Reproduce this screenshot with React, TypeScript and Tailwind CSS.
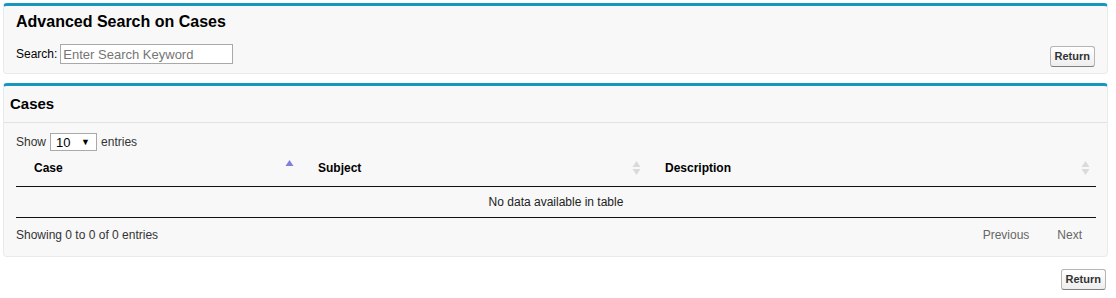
import React from "react";

const SortBoth = () => (
  <svg width="9" height="16" viewBox="0 0 9 16" className="block">
    <path d="M4.5 1 L8.5 7 L0.5 7 Z" fill="#dadada" />
    <path d="M4.5 15 L8.5 9 L0.5 9 Z" fill="#dadada" />
  </svg>
);

const SortAsc = () => (
  <svg width="9" height="16" viewBox="0 0 9 16" className="block">
    <path d="M4.5 1 L8.5 7 L0.5 7 Z" fill="#7f7fdd" />
  </svg>
);

const ReturnBtn = () => (
  <button className="h-[21px] px-[4px] rounded-[3px] border border-[#b5b5b5] border-b-[#7f7f7f] bg-gradient-to-b from-white to-[#eeeeee] text-[11px] font-bold text-[#333] leading-none">
    Return
  </button>
);

export default function App() {
  return (
    <div
      className="bg-white min-h-[298px] pl-[3px] pr-[8px] pt-[3px] text-[12px] text-[#222]"
      style={{ fontFamily: '"Liberation Sans", Arial, sans-serif' }}
    >
      {/* Panel 1 */}
      <div className="rounded-[4px] border border-[#eaeaea] border-t-[3px] border-t-[#1797c0] bg-[#f8f8f8] h-[71px] flex flex-col">
        <div className="pl-[12px] pt-[7px] text-[16px] font-bold text-black leading-[18px]">
          Advanced Search on Cases
        </div>
        <div className="flex items-end justify-between pl-[12px] pr-[12px] mt-[13px]">
          <div className="flex items-center gap-[3px]">
            <span className="text-[12px] text-black">Search:</span>
            <input
              placeholder="Enter Search Keyword"
              className="w-[173px] h-[20px] border border-[#a9a9a9] bg-white px-[2px] text-[13px] placeholder:text-[#757575] outline-none"
            />
          </div>
          <div className="mb-[-3px]">
            <ReturnBtn />
          </div>
        </div>
      </div>

      {/* Panel 2 */}
      <div className="mt-[9px] rounded-[4px] border border-[#eaeaea] border-t-[3px] border-t-[#1797c0] bg-[#f8f8f8] h-[174px]">
        <div className="h-[37px] border-b border-[#e0e3e5] pl-[6px] pt-[9px] text-[15px] font-bold text-black leading-[18px]">
          Cases
        </div>
        <div className="px-[12px] pt-[10px]">
          <div className="flex items-center h-[18px] text-[12px] text-[#333]">
            <span>Show</span>
            <div className="ml-[4px] mr-[4px] w-[47px] h-[18px] border border-[#a9a9a9] bg-white flex items-center justify-between pl-[5px] pr-[6px]">
              <span className="text-[13px] text-black leading-none">10</span>
              <span className="text-[9px] text-black leading-none">▼</span>
            </div>
            <span>entries</span>
          </div>
          <table className="border-collapse" style={{ width: 1080 }}>
            <thead>
              <tr className="border-b border-[#111]">
                <th className="w-[284px] h-[35px] pl-[18px] pr-[6px] text-left font-bold text-[12px] text-black">
                  <div className="flex items-center justify-between">
                    <span>Case</span>
                    <span className="-mt-[2px]"><SortAsc /></span>
                  </div>
                </th>
                <th className="w-[347px] pl-[18px] pr-[6px] text-left font-bold text-[12px] text-black">
                  <div className="flex items-center justify-between">
                    <span>Subject</span>
                    <SortBoth />
                  </div>
                </th>
                <th className="pl-[18px] pr-[6px] text-left font-bold text-[12px] text-black">
                  <div className="flex items-center justify-between">
                    <span>Description</span>
                    <SortBoth />
                  </div>
                </th>
              </tr>
            </thead>
            <tbody>
              <tr className="border-b border-[#111]">
                <td colSpan={3} className="h-[31px] text-center text-[12px] text-[#222]">
                  No data available in table
                </td>
              </tr>
            </tbody>
          </table>
          <div className="flex items-center justify-between h-[34px] text-[12px] text-[#333]">
            <span>Showing 0 to 0 of 0 entries</span>
            <div className="flex gap-[28px] pr-[13px] text-[#666]">
              <span>Previous</span>
              <span>Next</span>
            </div>
          </div>
        </div>
      </div>

      <div className="flex justify-end mt-[12px] pr-[2px]">
        <ReturnBtn />
      </div>
    </div>
  );
}
